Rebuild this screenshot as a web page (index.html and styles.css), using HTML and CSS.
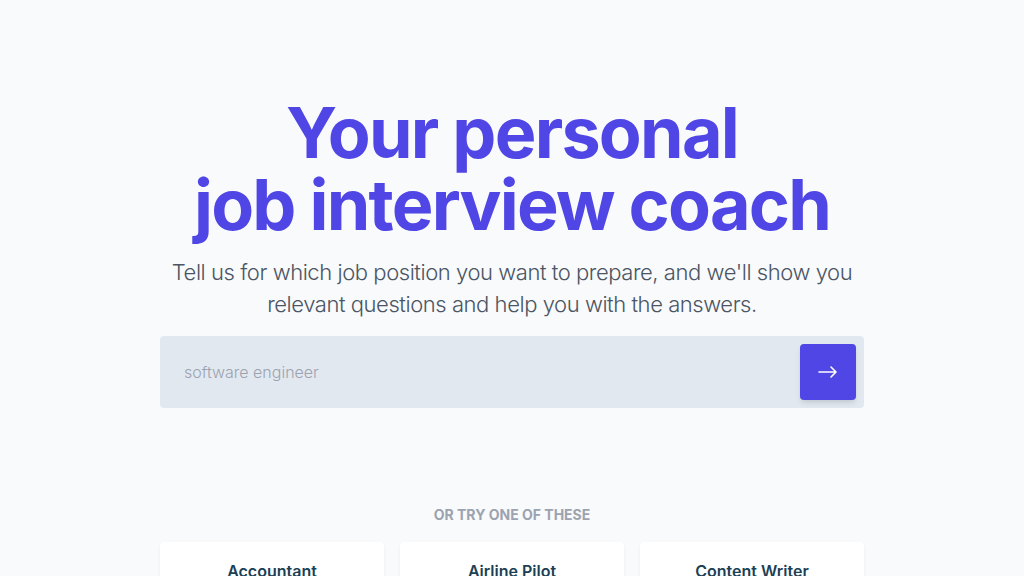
FILE: index.html
```html
<!DOCTYPE html>
<html lang="en">
<head>
<meta charset="utf-8">
<title>Interview coach</title>
<link rel="stylesheet" href="styles.css">
</head>
<body>
<main class="hero">
  <h1 class="title">Your personal<br>job interview coach</h1>
  <p class="lead">Tell us for which job position you want to prepare, and we'll show you relevant questions and help you with the answers.</p>
  <form class="search">
    <input class="search-input" type="text" placeholder="software engineer">
    <button class="search-btn" type="button" aria-label="Go">
      <svg width="20" height="20" viewBox="0 0 20 20" fill="none" stroke="currentColor" stroke-width="1.6" stroke-linecap="round" stroke-linejoin="round"><path d="M1 10h17M13 5l5 5-5 5"/></svg>
    </button>
  </form>
  <p class="try">Or try one of these</p>
  <div class="cards">
    <a class="card">Accountant</a>
    <a class="card">Airline Pilot</a>
    <a class="card">Content Writer</a>
  </div>
</main>
</body>
</html>
```
FILE: styles.css
```css
* { box-sizing: border-box; }
html, body { margin: 0; padding: 0; }
body {
  background: #f8fafc;
  font-family: Inter, "Noto Sans", sans-serif;
  color: #1f2937;
}
.hero {
  width: 704px;
  margin: 0 auto;
  padding-top: 97px;
  display: flex;
  flex-direction: column;
  align-items: center;
}
.title {
  margin: 0;
  font-size: 70px;
  line-height: 72px;
  font-weight: 700;
  letter-spacing: -0.025em;
  color: #4f46e5;
  text-align: center;
  white-space: nowrap;
}
.lead {
  margin: 15px 0 0;
  font-size: 22px;
  line-height: 32px;
  color: #4b5563;
  text-align: center;
  font-weight: 300;
  letter-spacing: -0.02em;
}
.search {
  margin-top: 16px;
  width: 100%;
  height: 72px;
  background: #e2e8f0;
  border-radius: 4px;
  display: flex;
  align-items: center;
  padding: 0 8px 0 22px;
}
.search-input {
  flex: 1;
  border: 0;
  background: transparent;
  font: inherit;
  font-size: 16px;
  font-weight: 300;
  color: #374151;
  outline: none;
}
.search-input::placeholder { color: #9ca3af; }
.search-btn {
  width: 56px;
  height: 56px;
  border: 0;
  border-radius: 4px;
  background: #4f46e5;
  color: #fff;
  display: flex;
  align-items: center;
  justify-content: center;
  box-shadow: 0 4px 6px -1px rgba(0,0,0,0.1), 0 2px 4px -1px rgba(0,0,0,0.06);
}
.try {
  margin: 97px 0 0;
  font-size: 14px;
  line-height: 20px;
  font-weight: 700;
  text-transform: uppercase;
  color: #9ca3af;
}
.cards {
  margin-top: 17px;
  width: 100%;
  display: grid;
  grid-template-columns: repeat(3, 1fr);
  gap: 16px;
}
.card {
  background: #fff;
  border-radius: 4px;
  box-shadow: 0 1px 3px rgba(0,0,0,0.06);
  padding: 17px 16px 24px;
  text-align: center;
  font-size: 16px;
  line-height: 24px;
  font-weight: 600;
  color: #1b3f55;
}
```
